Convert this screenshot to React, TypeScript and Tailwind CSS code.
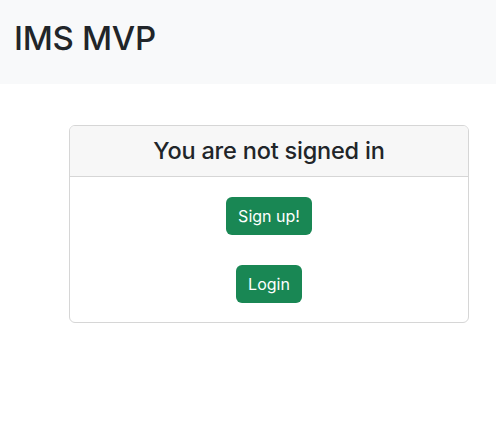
export default function App() {
  return (
    <div className="min-h-[430px] bg-white text-[#212529]" style={{ fontFamily: 'Inter, "Noto Sans", sans-serif' }}>
      <header className="h-[84px] bg-[#f8f9fa] flex items-start px-[14px] pt-[22px]">
        <h1 className="text-[33px] font-medium leading-[32px] tracking-[-0.3px]">IMS MVP</h1>
      </header>
      <div className="pt-[41px] pl-[69px] pr-[27px]">
        <div className="w-[400px] border border-[#d6d6d6] rounded-[6px] overflow-hidden">
          <div className="h-[51px] bg-[#f7f7f7] border-b border-[#d6d6d6] flex items-center justify-center">
            <h2 className="text-[23.5px] font-medium leading-none tracking-[-0.2px]">You are not signed in</h2>
          </div>
          <div className="flex flex-col items-center gap-[30px] pt-[20px] pb-[19px]">
            <button className="h-[38px] px-[12px] rounded-[6px] bg-[#198754] text-white text-[16px]">Sign up!</button>
            <button className="h-[38px] px-[12px] rounded-[6px] bg-[#198754] text-white text-[16px]">Login</button>
          </div>
        </div>
      </div>
    </div>
  );
}
